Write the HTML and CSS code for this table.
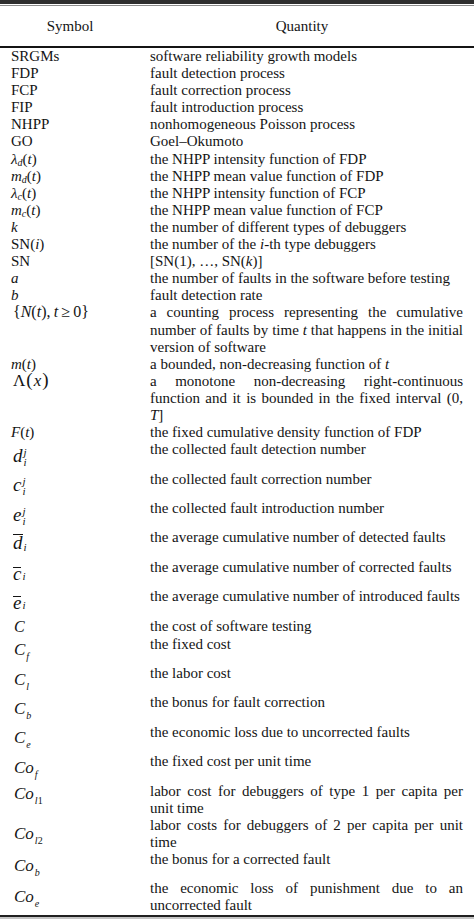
FILE: index.html
```html
<!DOCTYPE html>
<html>
<head>
<meta charset="utf-8">
<title>Notation</title>
<link rel="stylesheet" href="styles.css">
</head>
<body>
<div class="tbl">
  <div class="toprule"></div>
  <div class="head"><div class="h1">Symbol</div><div class="h2">Quantity</div></div>
  <div class="body">
    <div class="row"><div class="sym">SRGMs</div><div class="qty">software reliability growth models</div></div>
    <div class="row"><div class="sym">FDP</div><div class="qty">fault detection process</div></div>
    <div class="row"><div class="sym">FCP</div><div class="qty">fault correction process</div></div>
    <div class="row"><div class="sym">FIP</div><div class="qty">fault introduction process</div></div>
    <div class="row"><div class="sym">NHPP</div><div class="qty">nonhomogeneous Poisson process</div></div>
    <div class="row"><div class="sym">GO</div><div class="qty">Goel–Okumoto</div></div>
    <div class="row"><div class="sym"><span class="it">λ</span><span class="sb">d</span>(<span class="it">t</span>)</div><div class="qty">the NHPP intensity function of FDP</div></div>
    <div class="row"><div class="sym"><span class="it">m</span><span class="sb">d</span>(<span class="it">t</span>)</div><div class="qty">the NHPP mean value function of FDP</div></div>
    <div class="row"><div class="sym"><span class="it">λ</span><span class="sb">c</span>(<span class="it">t</span>)</div><div class="qty">the NHPP intensity function of FCP</div></div>
    <div class="row"><div class="sym"><span class="it">m</span><span class="sb">c</span>(<span class="it">t</span>)</div><div class="qty">the NHPP mean value function of FCP</div></div>
    <div class="row"><div class="sym"><span class="it">k</span></div><div class="qty">the number of different types of debuggers</div></div>
    <div class="row"><div class="sym">SN(<span class="it">i</span>)</div><div class="qty">the number of the <span class="it">i</span>-th type debuggers</div></div>
    <div class="row"><div class="sym">SN</div><div class="qty">[SN(1), …, SN(<span class="it">k</span>)]</div></div>
    <div class="row"><div class="sym"><span class="it">a</span></div><div class="qty">the number of faults in the software before testing</div></div>
    <div class="row"><div class="sym"><span class="it">b</span></div><div class="qty">fault detection rate</div></div>
    <div class="row"><div class="sym"><span class="mt">{<span class="it">N</span>(<span class="it">t</span>),&thinsp;<span class="it">t</span>&thinsp;≥&thinsp;0}</span></div><div class="qty">a counting process representing the cumulative number of faults by time <span class="it">t</span> that happens in the initial version of software</div></div>
    <div class="row"><div class="sym"><span class="it">m</span>(<span class="it">t</span>)</div><div class="qty">a bounded, non-decreasing function of <span class="it">t</span></div></div>
    <div class="row"><div class="sym"><span class="lam">Λ<span class="pr">(</span><span class="it">x</span><span class="pr">)</span></span></div><div class="qty">a monotone non-decreasing right-continuous function and it is bounded in the fixed interval (0, <span class="it">T</span>]</div></div>
    <div class="row"><div class="sym"><span class="it">F</span>(<span class="it">t</span>)</div><div class="qty">the fixed cumulative density function of FDP</div></div>

    <div class="row tall"><div class="sym mid"><span class="mx"><span class="it">d</span><span class="ss"><span>j</span><span>i</span></span></span></div><div class="qty">the collected fault detection number</div></div>
    <div class="row tall"><div class="sym mid"><span class="mx"><span class="it">c</span><span class="ss"><span>j</span><span>i</span></span></span></div><div class="qty">the collected fault correction number</div></div>
    <div class="row tall"><div class="sym mid"><span class="mx"><span class="it">e</span><span class="ss"><span>j</span><span>i</span></span></span></div><div class="qty">the collected fault introduction number</div></div>
    <div class="row tall"><div class="sym mid"><span class="mx"><span class="bar bd it">d</span><span class="sbx">i</span></span></div><div class="qty">the average cumulative number of detected faults</div></div>
    <div class="row tall"><div class="sym mid"><span class="mx"><span class="bar bc it">c</span><span class="sbx">i</span></span></div><div class="qty">the average cumulative number of corrected faults</div></div>
    <div class="row tall"><div class="sym mid"><span class="mx"><span class="bar bc it">e</span><span class="sbx">i</span></span></div><div class="qty">the average cumulative number of introduced faults</div></div>

    <div class="row"><div class="sym"><span class="cc it">C</span></div><div class="qty">the cost of software testing</div></div>
    <div class="row tall"><div class="sym mid"><span class="mc"><span class="it">C</span><span class="sbc">f</span></span></div><div class="qty">the fixed cost</div></div>
    <div class="row tall"><div class="sym mid"><span class="mc"><span class="it">C</span><span class="sbc">l</span></span></div><div class="qty">the labor cost</div></div>
    <div class="row tall"><div class="sym mid"><span class="mc"><span class="it">C</span><span class="sbc">b</span></span></div><div class="qty">the bonus for fault correction</div></div>
    <div class="row tall"><div class="sym mid"><span class="mc"><span class="it">C</span><span class="sbc">e</span></span></div><div class="qty">the economic loss due to uncorrected faults</div></div>
    <div class="row tall"><div class="sym mid"><span class="mc"><span class="it">Co</span><span class="sbc">f</span></span></div><div class="qty">the fixed cost per unit time</div></div>
    <div class="row"><div class="sym first"><span class="mc"><span class="it">Co</span><span class="sbc"><span class="it">l</span><span class="up">1</span></span></span></div><div class="qty">labor cost for debuggers of type 1 per capita per unit time</div></div>
    <div class="row"><div class="sym mid"><span class="mc"><span class="it">Co</span><span class="sbc"><span class="it">l</span><span class="up">2</span></span></span></div><div class="qty">labor costs for debuggers of 2 per capita per unit time</div></div>
    <div class="row tall"><div class="sym mid"><span class="mc"><span class="it">Co</span><span class="sbc">b</span></span></div><div class="qty">the bonus for a corrected fault</div></div>
    <div class="row"><div class="sym mid"><span class="mc"><span class="it">Co</span><span class="sbc">e</span></span></div><div class="qty">the economic loss of punishment due to an uncorrected fault</div></div>
  </div>
  <div class="botrule"></div>
</div>
</body>
</html>
```

FILE: styles.css
```css
html, body {
  margin: 0;
  padding: 0;
  background: #ffffff;
}
body {
  font-family: "Liberation Serif", "Times New Roman", serif;
  font-size: 15px;
  color: #141414;
}
.tbl {
  width: 474px;
}
.toprule {
  height: 1px;
  border-top: 4px solid #2e2e2e;
  border-bottom: 1px solid #8c8c8c;
}
.head {
  display: grid;
  grid-template-columns: 140px 324px;
  height: 40px;
  align-items: center;
  border-bottom: 2px solid #141414;
}
.h1, .h2 {
  text-align: center;
}
.row {
  display: grid;
  grid-template-columns: 150px 313px;
  line-height: 17.1px;
  align-items: start;
}
.row.tall {
  height: 29.4px;
}
.sym {
  padding-left: 11px;
  white-space: nowrap;
}
.sym.mid {
  align-self: center;
}
.sym.first {
  padding-top: 2px;
}
.qty {
  text-align: justify;
}
.it {
  font-style: italic;
}
.up {
  font-style: normal;
}
.sb {
  font-style: italic;
  font-size: 10px;
  line-height: 0;
  vertical-align: -2px;
}
.mt {
  font-size: 16px;
  margin-left: 2px;
  line-height: 0;
}
.lam {
  font-size: 17px;
  margin-left: 2px;
  line-height: 0;
}
.lam .pr {
  font-size: 19px;
  margin: 0 1px;
}
.mx {
  font-size: 19px;
  margin-left: 2px;
  display: inline-flex;
  align-items: center;
  line-height: 20px;
}
.ss {
  display: inline-flex;
  flex-direction: column;
  font-size: 11px;
  line-height: 10px;
  font-style: italic;
  margin-left: 1px;
  margin-top: 2px;
}
.bar {
  display: inline-block;
  border-top: 1.2px solid #141414;
}
.bd {
  line-height: 15px;
}
.bc {
  line-height: 11px;
  margin-top: 4px;
}
.sbx {
  font-size: 11px;
  font-style: italic;
  align-self: flex-end;
  margin-left: 1px;
  line-height: 10px;
  margin-bottom: -2px;
}
.cc {
  font-size: 16px;
  margin-left: 3px;
}
.mc {
  font-size: 17px;
  margin-left: 3px;
  line-height: 18px;
}
.sbc {
  font-size: 10px;
  font-style: italic;
  vertical-align: -5px;
  line-height: 0;
  margin-left: 1px;
}
.botrule {
  height: 3px;
  border-top: 2px solid #202020;
  background: #c4c4c4;
}
```
